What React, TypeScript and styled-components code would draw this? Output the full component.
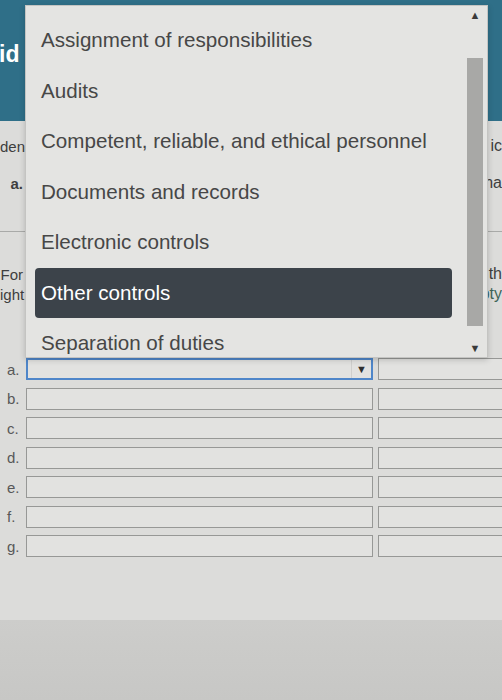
import styled, { createGlobalStyle } from "styled-components";

const options = [
  "Assignment of responsibilities",
  "Audits",
  "Competent, reliable, and ethical personnel",
  "Documents and records",
  "Electronic controls",
  "Other controls",
  "Separation of duties",
];

const rows = ["a.", "b.", "c.", "d.", "e.", "f.", "g."];

const GlobalStyle = createGlobalStyle`
  html, body {
    margin: 0;
    padding: 0;
    background: #dcdcda;
    overflow: hidden;
  }
  * {
    box-sizing: border-box;
  }
`;

const Page = styled.div`
  position: relative;
  width: 502px;
  height: 700px;
  overflow: hidden;
  display: flex;
  flex-direction: column;
  font-family: "Liberation Sans", Arial, sans-serif;
  background: #dcdcda;
`;

const Header = styled.div`
  height: 121px;
  flex-shrink: 0;
  background: #2f6f88;
  color: #ffffff;
  font-weight: bold;
  font-size: 23px;
  padding: 41px 0 0 0;
  margin-left: -1px;
`;

const Line = styled.div<{ height: number }>`
  height: ${({ height }) => height}px;
  display: flex;
  align-items: center;
  justify-content: space-between;
  font-size: 15px;
  color: #3e3e3e;
  white-space: nowrap;
`;

const LeftBit = styled.span<{ bold?: boolean }>`
  width: 25px;
  text-align: right;
  padding-right: 2px;
  font-weight: ${({ bold }) => (bold ? "bold" : "normal")};
`;

const RightBit = styled.span<{ green?: boolean }>`
  text-align: right;
  font-size: 16px;
  color: ${({ green }) => (green ? "#3f6659" : "#3e3e3e")};
`;

const Rule = styled.div`
  height: 1px;
  background: #a9aaa8;
`;

const Spacer = styled.div<{ size: number }>`
  height: ${({ size }) => size}px;
  flex-shrink: 0;
`;

const Table = styled.div`
  margin-top: 54px;
  display: flex;
  flex-direction: column;
  gap: 7.5px;
`;

const Row = styled.div`
  display: grid;
  grid-template-columns: 21px 347px 140px;
  column-gap: 5px;
  height: 22px;
  align-items: stretch;
`;

const RowLabel = styled.span`
  font-size: 15px;
  color: #585858;
  padding-left: 7px;
  display: flex;
  align-items: center;
`;

const Field = styled.div<{ focused?: boolean }>`
  background: #e2e2e0;
  border: ${({ focused }) =>
    focused ? "2px solid #4f86c9" : "1px solid #979896"};
  display: flex;
  justify-content: flex-end;
  align-items: stretch;
`;

const SelectArrow = styled.span`
  width: 20px;
  display: flex;
  align-items: center;
  justify-content: center;
  font-size: 11px;
  color: #2f2f2f;
  border-left: 1px solid #cfcfcd;
`;

const Bezel = styled.div`
  margin-top: auto;
  height: 80px;
  background: linear-gradient(#cdcdcb, #c7c7c5);
`;

const Dropdown = styled.div`
  position: absolute;
  top: 5px;
  left: 25px;
  width: 463px;
  height: 353px;
  background: #e4e4e2;
  border: 1px solid #c4c4c2;
  box-shadow: 0 2px 6px rgba(0, 0, 0, 0.18);
  display: flex;
`;

const List = styled.ul`
  list-style: none;
  margin: 0;
  padding: 9px 11px 0 9px;
  flex: 1;
  display: flex;
  flex-direction: column;
`;

const Item = styled.li<{ active?: boolean }>`
  height: 50.5px;
  flex-shrink: 0;
  display: flex;
  align-items: center;
  padding-left: 6px;
  font-size: 20.6px;
  white-space: nowrap;
  border-radius: 4px;
  color: ${({ active }) => (active ? "#ffffff" : "#474747")};
  background: ${({ active }) => (active ? "#3c434a" : "transparent")};
`;

const Scrollbar = styled.div`
  width: 24px;
  display: flex;
  flex-direction: column;
  align-items: center;
`;

const ScrollArrow = styled.span`
  height: 18px;
  display: flex;
  align-items: center;
  justify-content: center;
  font-size: 11px;
  color: #3a3a3a;
`;

const Track = styled.div`
  flex: 1;
  width: 100%;
  display: flex;
  justify-content: center;
`;

const Thumb = styled.div`
  margin-top: 34px;
  width: 16px;
  height: 268px;
  background: #a8a8a6;
`;

export default function App() {
  return (
    <>
      <GlobalStyle />
      <Page>
        <Header>id</Header>
        <Line height={50}>
          <LeftBit>den</LeftBit>
          <RightBit>ic</RightBit>
        </Line>
        <Line height={24}>
          <LeftBit bold>a.</LeftBit>
          <RightBit>ha</RightBit>
        </Line>
        <Spacer size={36} />
        <Rule />
        <Spacer size={32} />
        <Line height={20}>
          <LeftBit>For</LeftBit>
          <RightBit>th</RightBit>
        </Line>
        <Line height={20}>
          <LeftBit>ight</LeftBit>
          <RightBit green>pty</RightBit>
        </Line>
        <Table>
          {rows.map((label, i) => (
            <Row key={label}>
              <RowLabel>{label}</RowLabel>
              <Field focused={i === 0}>
                {i === 0 && <SelectArrow>▼</SelectArrow>}
              </Field>
              <Field />
            </Row>
          ))}
        </Table>
        <Bezel />
        <Dropdown>
          <List>
            {options.map((opt) => (
              <Item key={opt} active={opt === "Other controls"}>
                {opt}
              </Item>
            ))}
          </List>
          <Scrollbar>
            <ScrollArrow>▲</ScrollArrow>
            <Track>
              <Thumb />
            </Track>
            <ScrollArrow>▼</ScrollArrow>
          </Scrollbar>
        </Dropdown>
      </Page>
    </>
  );
}
